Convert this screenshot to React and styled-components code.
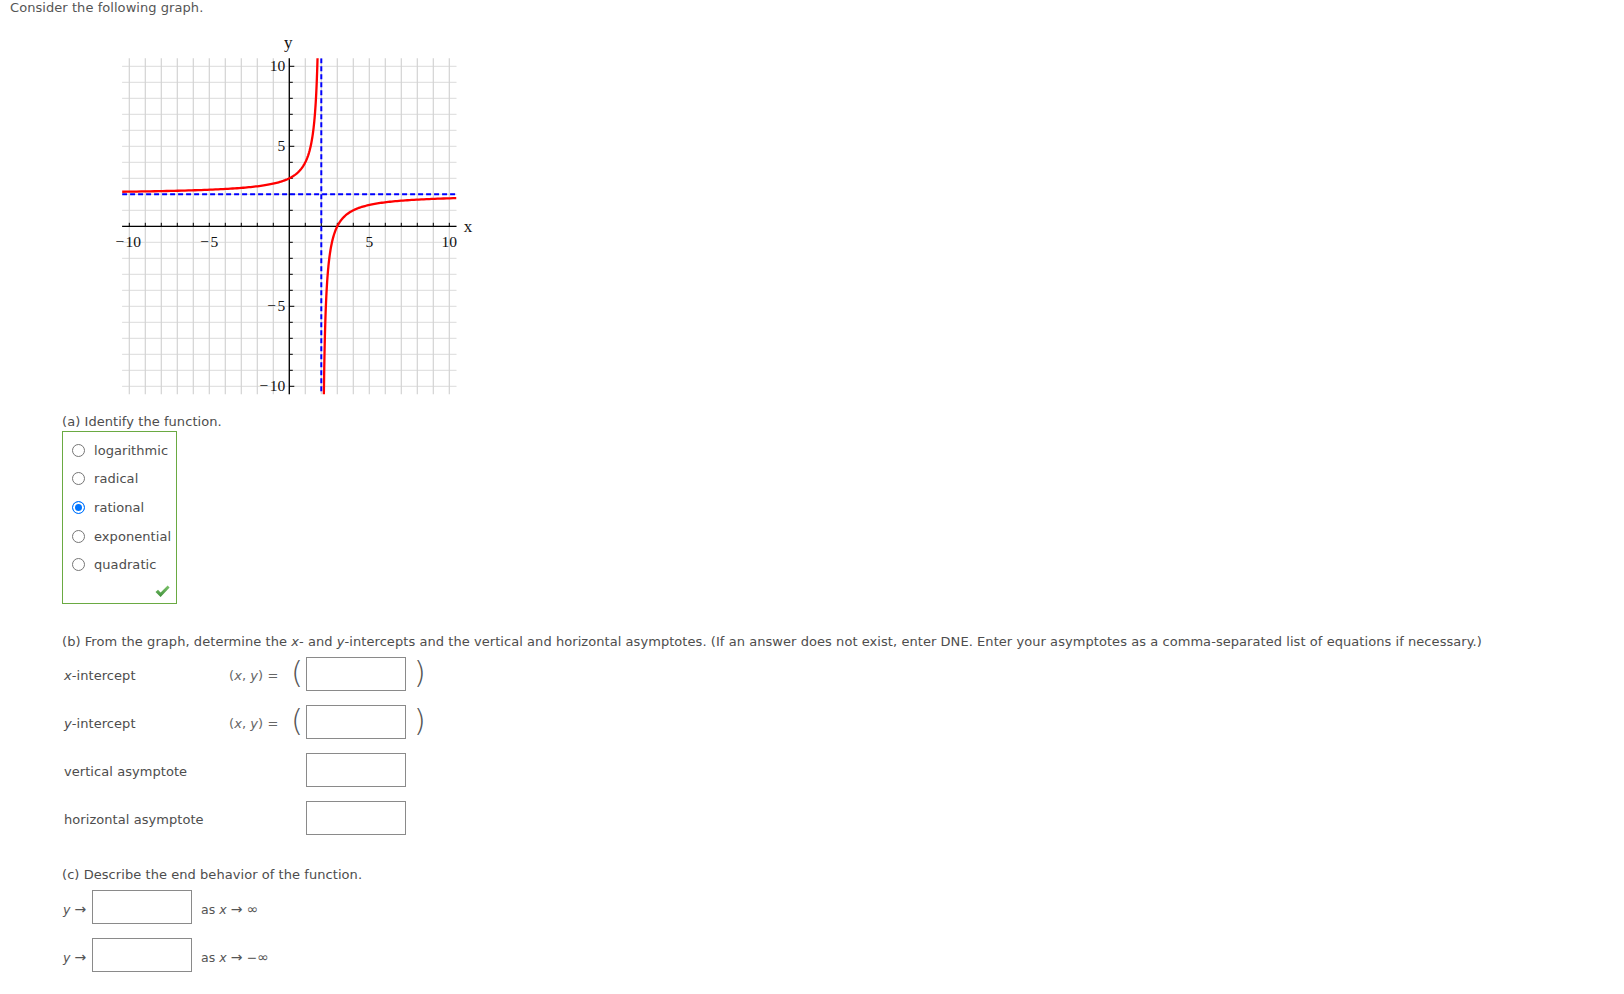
import React from 'react';
import styled, { createGlobalStyle } from 'styled-components';

const GlobalStyle = createGlobalStyle`
  body {
    margin: 0;
    background: #fff;
    font-family: "DejaVu Sans", Verdana, sans-serif;
    font-size: 13px;
    letter-spacing: 0.06px;
    color: #4d4d4d;
  }
`;

// graph scale: 16px per unit, origin inside the svg
const UNIT = 16;
const OX = 189.3;
const OY = 194.3;
const px = (x) => OX + UNIT * x;
const py = (y) => OY - UNIT * y;
const XMIN = -10.45;
const XMAX = 10.45;
const YMIN = -10.5;
const YMAX = 10.5;

const f = (x) => 2 - 2 / (x - 2);

const branch = (d0, d1, sign) => {
  const pts = [];
  const n = 160;
  for (let i = 0; i <= n; i++) {
    const d = d0 * Math.pow(d1 / d0, i / n);
    const x = 2 + sign * d;
    pts.push(`${px(x).toFixed(2)},${py(f(x)).toFixed(2)}`);
  }
  return 'M' + pts.join(' L');
};

const leftBranch = branch(2 - XMIN, 2 / 9.2, -1);
const rightBranch = branch(2 / 13.2, XMAX - 2, 1);

const Page = styled.div`
  padding: 0 10px;
`;

const Title = styled.p`
  margin: 0;
  line-height: 16px;
  color: #555;
`;

const GraphWrap = styled.div`
  margin: 16px 0 0 90px;
  width: 380px;
  height: 370px;
  svg {
    display: block;
  }
`;

const Part = styled.section`
  margin-left: 52px;
  margin-top: ${(p) => p.$top}px;
`;

const Prompt = styled.p`
  margin: 0;
  line-height: 16px;
`;

const ChoiceBox = styled.div`
  box-sizing: border-box;
  width: 115px;
  height: 173px;
  margin-top: 1px;
  border: 1px solid #6aaa42;
  padding-top: 4px;
  display: flex;
  flex-direction: column;
`;

const Choice = styled.label`
  height: 28.6px;
  display: flex;
  align-items: center;
  gap: 9px;
  padding-left: 9px;
`;

const Radio = styled.span`
  box-sizing: border-box;
  width: 13px;
  height: 13px;
  border-radius: 50%;
  border: 1px solid ${(p) => (p.$on ? '#0075ff' : '#767676')};
  background: ${(p) => (p.$on ? '#0075ff' : '#fff')};
  box-shadow: ${(p) => (p.$on ? 'inset 0 0 0 2px #fff' : 'none')};
  flex: none;
`;

const CheckRow = styled.div`
  margin-top: auto;
  display: flex;
  justify-content: flex-end;
  padding: 0 6px 5px 0;
`;

const AnswerGrid = styled.div`
  margin-top: 7px;
  display: grid;
  grid-template-columns: 167px 62px 15px 100px 20px;
  grid-auto-rows: 34px;
  row-gap: 14px;
  align-items: center;
`;

const RowLabel = styled.span`
  padding: 2px 0 0 2px;
`;

const Coord = styled.span`
  color: #666;
  padding-top: 2px;
`;

const Paren = styled.span`
  font-size: 31px;
  font-weight: 200;
  color: #555;
  line-height: 34px;
  height: 34px;
  margin-top: -4px;
  text-align: ${(p) => (p.$close ? 'right' : 'left')};
`;

const Box = styled.input`
  box-sizing: border-box;
  width: 100px;
  height: 34px;
  margin: 0;
  border: 1px solid #8a8a8a;
  border-radius: 0;
  background: #fff;
  font: inherit;
  padding: 2px 6px;
  outline: none;
`;

const EndGrid = styled.div`
  margin-top: 7px;
  display: grid;
  grid-template-columns: 21px 100px auto;
  grid-auto-rows: 34px;
  row-gap: 14px;
  column-gap: 9px;
  align-items: center;
  justify-content: start;
`;

const EndLabel = styled.span`
  padding-top: 5px;
  color: #555;
  font-size: 12.5px;
  white-space: nowrap;
  margin-left: ${(p) => (p.$first ? '1px' : '0')};
`;

const Sym = styled.span`
  font-size: 14px;
  line-height: 1;
`;

const Grid = () => {
  const vLines = [];
  const hLines = [];
  for (let i = -10; i <= 10; i++) {
    vLines.push(<line key={'v' + i} x1={px(i)} x2={px(i)} y1={py(YMAX)} y2={py(YMIN)} stroke="#d3d3d3" strokeWidth="1.2" />);
    hLines.push(<line key={'h' + i} x1={px(XMIN)} x2={px(XMAX)} y1={py(i)} y2={py(i)} stroke="#e2e2e2" strokeWidth="1.2" />);
  }
  const ticks = [];
  for (let i = -10; i <= 10; i++) {
    if (i === 0) continue;
    ticks.push(<line key={'tx' + i} x1={px(i)} x2={px(i)} y1={py(0)} y2={py(0) - 3.5} stroke="#000" strokeWidth="1" />);
    const long = i % 5 === 0;
    ticks.push(<line key={'ty' + i} x1={px(0)} x2={px(0) + (long ? 5 : 3.5)} y1={py(i)} y2={py(i)} stroke="#000" strokeWidth="1" />);
  }
  const label = { fontFamily: '"Liberation Serif", "DejaVu Serif", serif', fontSize: 15.5, fill: '#111' };
  const neg = (n) => `\u2212\u200A${n}`;
  return (
    <svg width="380" height="370" viewBox="0 0 380 370">
      <defs>
        <clipPath id="plot">
          <rect x={px(XMIN)} y={py(YMAX)} width={px(XMAX) - px(XMIN)} height={py(YMIN) - py(YMAX)} />
        </clipPath>
      </defs>
      {hLines}
      {vLines}
      <line x1={px(XMIN)} x2={px(XMAX)} y1={py(0)} y2={py(0)} stroke="#000" strokeWidth="1.3" />
      <line x1={px(0)} x2={px(0)} y1={py(YMAX)} y2={py(YMIN)} stroke="#000" strokeWidth="1.3" />
      {ticks}
      <g clipPath="url(#plot)" fill="none">
        <line x1={px(XMIN)} x2={px(XMAX)} y1={py(2)} y2={py(2)} stroke="#0000ff" strokeWidth="2" strokeDasharray="5 3" />
        <line x1={px(2)} x2={px(2)} y1={py(YMAX)} y2={py(YMIN)} stroke="#0000ff" strokeWidth="2" strokeDasharray="5 3" />
        <path d={leftBranch} stroke="#ff0000" strokeWidth="2.3" strokeLinejoin="round" />
        <path d={rightBranch} stroke="#ff0000" strokeWidth="2.3" strokeLinejoin="round" />
      </g>
      <text {...label} x={px(-10) - 1} y={py(0) + 21} textAnchor="middle">{neg(10)}</text>
      <text {...label} x={px(-5)} y={py(0) + 21} textAnchor="middle">{neg(5)}</text>
      <text {...label} x={px(5)} y={py(0) + 21} textAnchor="middle">5</text>
      <text {...label} x={px(10)} y={py(0) + 21} textAnchor="middle">10</text>
      <text {...label} x={px(0) - 4} y={py(10) + 5} textAnchor="end">10</text>
      <text {...label} x={px(0) - 4} y={py(5) + 5} textAnchor="end">5</text>
      <text {...label} x={px(0) - 4} y={py(-5) + 5} textAnchor="end">{neg(5)}</text>
      <text {...label} x={px(0) - 4} y={py(-10) + 5} textAnchor="end">{neg(10)}</text>
      <text {...label} fontSize="17" x={px(0) - 1} y={16} textAnchor="middle">y</text>
      <text {...label} fontSize="17" x={368} y={200} textAnchor="middle">x</text>
    </svg>
  );
};

const Check = () => (
  <svg width="15" height="13" viewBox="0 0 15 13">
    <defs>
      <linearGradient id="ck" x1="0" y1="0" x2="0" y2="1">
        <stop offset="0" stopColor="#7cc36a" />
        <stop offset="1" stopColor="#3f8f3a" />
      </linearGradient>
    </defs>
    <path d="M0.5 7 L3 4.8 L5.6 7.6 L12.6 0.6 L14.6 2.5 L5.6 12 Z" fill="url(#ck)" />
  </svg>
);

const choices = ['logarithmic', 'radical', 'rational', 'exponential', 'quadratic'];

const answers = [
  { label: <><i>x</i>-intercept</>, coord: true },
  { label: <><i>y</i>-intercept</>, coord: true },
  { label: 'vertical asymptote' },
  { label: 'horizontal asymptote' },
];

export default function App() {
  return (
    <Page>
      <GlobalStyle />
      <Title>Consider the following graph.</Title>
      <GraphWrap>
        <Grid />
      </GraphWrap>

      <Part $top={12}>
        <Prompt>(a) Identify the function.</Prompt>
        <ChoiceBox>
          {choices.map((c) => (
            <Choice key={c}>
              <Radio $on={c === 'rational'} />
              {c}
            </Choice>
          ))}
          <CheckRow>
            <Check />
          </CheckRow>
        </ChoiceBox>
      </Part>

      <Part $top={30}>
        <Prompt>
          (b) From the graph, determine the <i>x</i>- and <i>y</i>-intercepts and the vertical and horizontal asymptotes. (If an answer does not exist, enter DNE. Enter your asymptotes as a comma-separated list of equations if necessary.)
        </Prompt>
        <AnswerGrid>
          {answers.map((a, i) => (
            <React.Fragment key={i}>
              <RowLabel>{a.label}</RowLabel>
              <Coord>{a.coord ? <>(<i>x</i>, <i>y</i>) =</> : null}</Coord>
              <Paren>{a.coord ? '(' : ''}</Paren>
              <Box type="text" />
              <Paren $close>{a.coord ? ')' : ''}</Paren>
            </React.Fragment>
          ))}
        </AnswerGrid>
      </Part>

      <Part $top={32}>
        <Prompt>(c) Describe the end behavior of the function.</Prompt>
        <EndGrid>
          <EndLabel $first><i>y</i> <Sym>→</Sym></EndLabel>
          <Box type="text" />
          <EndLabel>as <i>x</i> <Sym>→</Sym> <Sym>∞</Sym></EndLabel>
          <EndLabel $first><i>y</i> <Sym>→</Sym></EndLabel>
          <Box type="text" />
          <EndLabel>as <i>x</i> <Sym>→</Sym> −<Sym>∞</Sym></EndLabel>
        </EndGrid>
      </Part>
    </Page>
  );
}
